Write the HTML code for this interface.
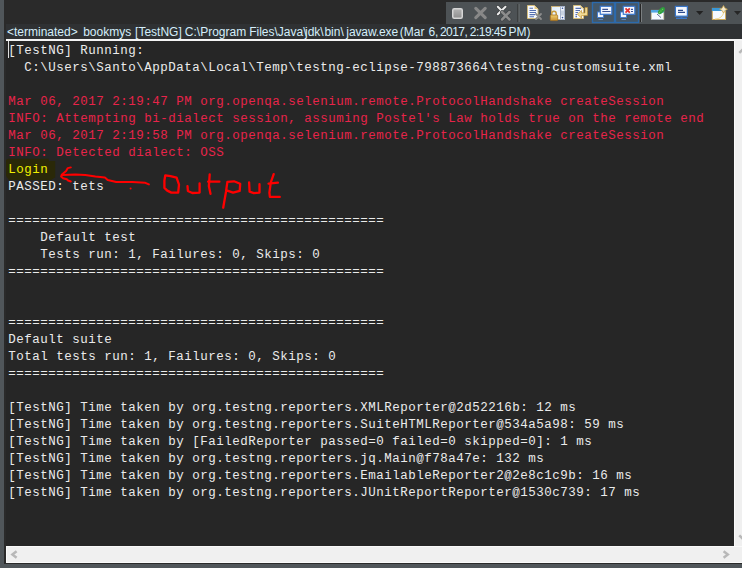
<!DOCTYPE html>
<html><head><meta charset="utf-8">
<style>
html,body{margin:0;padding:0;width:742px;height:568px;overflow:hidden;background:#50565a;}
*{box-sizing:border-box;}
#panel{position:absolute;left:4px;top:0;width:738px;height:564px;background:#2a2a2a;}
#tb{position:absolute;left:446px;top:2px;width:296px;height:22px;background:#4b4f52;}
#title{position:absolute;left:6px;top:24px;width:736px;height:15px;background:#2f3133;}
#titletext{position:absolute;left:7px;top:24px;font-family:"Liberation Sans",sans-serif;font-size:12px;color:#d4eefa;white-space:pre;line-height:17px;}
.tt{position:absolute;top:24px;font-family:"Liberation Sans",sans-serif;font-size:12px;color:#d4eefa;white-space:pre;line-height:17px;}
#frame{position:absolute;left:6px;top:39px;width:736px;height:2px;background:#f4f4f4;}
#console{position:absolute;left:6px;top:41px;width:728px;height:505px;background:#262626;overflow:hidden;}
#vs{position:absolute;left:734px;top:41px;width:8px;height:522px;background:#f0f0f0;border-left:1px solid #fafafa;}
#hs{position:absolute;left:6px;top:546px;width:736px;height:17px;background:#f0f0f0;border:1px solid #fafafa;border-right:none;}
#txt{position:absolute;left:2px;top:1.5px;font-family:"Liberation Mono",monospace;font-size:12.5px;letter-spacing:0.5px;line-height:17px;color:#ebebeb;padding-left:0.25px;white-space:pre;}
.r{color:#e8244a;}
.y{color:#f0f000;}
#caret{position:absolute;left:2px;top:0;width:1px;height:17px;background:#e0e0e0;}
</style></head>
<body>
<div id="panel"></div>
<svg id="tbsvg" width="742" height="26" viewBox="0 0 742 26" style="position:absolute;left:0;top:0">
<defs>
<linearGradient id="gsq" x1="0" y1="0" x2="0" y2="1"><stop offset="0" stop-color="#b4b4b4"/><stop offset="1" stop-color="#8e8e8e"/></linearGradient>
<linearGradient id="gwin" x1="0" y1="0" x2="1" y2="1"><stop offset="0" stop-color="#dcecfc"/><stop offset="1" stop-color="#ffffff"/></linearGradient>
<linearGradient id="ggold" x1="0" y1="0" x2="0" y2="1"><stop offset="0" stop-color="#f0d070"/><stop offset="1" stop-color="#c89030"/></linearGradient>
</defs>
<rect x="446" y="2" width="296" height="22" fill="#4d5255"/>
<!-- stop square -->
<rect x="452.75" y="8.75" width="9.5" height="9.5" rx="1.5" fill="url(#gsq)" stroke="#d6d6d6" stroke-width="1.5"/>
<!-- gray X -->
<path d="M475.8 8.3 L485.2 17.7 M485.2 8.3 L475.8 17.7" stroke="#888888" stroke-width="3.1" stroke-linecap="round"/>
<!-- double X -->
<path d="M497.8 6.8 L505 14 M505.5 6.8 L497.8 14.2" stroke="#3c3f41" stroke-width="3.4" stroke-linecap="round"/>
<path d="M497.8 6.8 L505 14 M505.5 6.8 L497.8 14.2" stroke="#ececec" stroke-width="2" stroke-linecap="round"/>
<path d="M502 12 L509.5 19.5 M509.5 12 L502 19.5" stroke="#3c3f41" stroke-width="3.8" stroke-linecap="round"/>
<path d="M502 12 L509.5 19.5 M509.5 12 L502 19.5" stroke="#8c8c8c" stroke-width="2.5" stroke-linecap="round"/>
<!-- separator -->
<rect x="517.5" y="4" width="1" height="18" fill="#2a2a2a"/><rect x="518.5" y="4" width="1" height="18" fill="#6e7275"/>
<!-- doc clear -->
<path d="M527.5 5.5 H534.5 L538 9 V18.5 H527.5 Z" fill="#f6f9ff" stroke="#d4bc7c" stroke-width="1"/>
<path d="M534.5 5.5 V9 H538 Z" fill="#e8cc84"/>
<path d="M529.5 8.3 H533 M529.5 10.4 H536 M529.5 12.5 H536 M529.5 14.6 H535 M529.5 16.7 H534" stroke="#5670b0" stroke-width="1.05"/>
<path d="M536 14 L541 19 M541 14 L536 19" stroke="#8c8c8c" stroke-width="1.8" stroke-linecap="round"/>
<!-- scroll lock -->
<rect x="551.5" y="6.5" width="13" height="13" fill="url(#gwin)" stroke="#c8b07a" stroke-width="1"/>
<rect x="560.5" y="6.5" width="4" height="13" fill="#f4f7fc" stroke="#a8b4cc" stroke-width="1"/>
<rect x="561" y="10.5" width="3" height="5" fill="#c8d2e2"/>
<circle cx="562.5" cy="8.3" r="0.8" fill="#3050a0"/><circle cx="562.5" cy="17.6" r="0.8" fill="#3050a0"/>
<path d="M551.8 15 V13.5 A2.2 2.2 0 0 1 556.2 13.5 V15" fill="none" stroke="#c89a38" stroke-width="1.4"/>
<rect x="550.3" y="15" width="7.4" height="5.6" rx="0.8" fill="url(#ggold)" stroke="#a87420" stroke-width="0.8"/>
<!-- word wrap -->
<path d="M573.5 5.5 H580.5 L583.5 8.5 V18.5 H573.5 Z" fill="#f6f9ff" stroke="#d4bc7c" stroke-width="1"/>
<path d="M580.5 5.5 V8.5 H583.5 Z" fill="#e8cc84"/>
<path d="M575.5 8.4 H581 M575.5 10.5 H580 M575.5 12.5 H578 M575.5 14.6 H577 M575.5 16.6 H577" stroke="#5670b0" stroke-width="1.05"/>
<path d="M585 7.5 H587.4 V15.6 H581.5 V18 L577.3 14.2 L581.5 10.4 V12.9 H585 Z" fill="#f0dc98" stroke="#c49434" stroke-width="0.7"/>
<!-- pressed buttons -->
<rect x="592.5" y="2.5" width="22" height="20" fill="#44586a" stroke="#2c6aac" stroke-width="1.4"/>
<rect x="615.5" y="2.5" width="23" height="20" fill="#44586a" stroke="#2c6aac" stroke-width="1.4"/>
<!-- bubble 1 -->
<rect x="597.5" y="12" width="6" height="5.5" fill="#f2f6fc" stroke="#3e7ad0" stroke-width="0.9"/>
<rect x="600.3" y="6.3" width="11.5" height="8" fill="#f4f8ff" stroke="#3e7ad0" stroke-width="1.2"/>
<path d="M602.3 9.4 H608 M602.3 11.5 H610.5" stroke="#3c5494" stroke-width="1.1"/>
<path d="M598.5 19.5 H603" stroke="#5a88c8" stroke-width="0.9"/>
<!-- bubble 2 -->
<rect x="620.5" y="12" width="6" height="5.5" fill="#f2f6fc" stroke="#3e7ad0" stroke-width="0.9"/>
<rect x="623.3" y="6.3" width="11.5" height="8" fill="#f4f8ff" stroke="#3e7ad0" stroke-width="1.2"/>
<path d="M625.5 8.3 L629.8 12.6 M629.8 8.3 L625.5 12.6" stroke="#e03030" stroke-width="1.8"/>
<path d="M631 9.4 H633 M631 11.5 H633" stroke="#3c5494" stroke-width="1.1"/>
<path d="M621.5 19.5 H626" stroke="#5a88c8" stroke-width="0.9"/>
<!-- separator 2 -->
<rect x="640" y="4" width="1" height="18" fill="#262626"/><rect x="641" y="4" width="1" height="18" fill="#7a7e80"/>
<!-- pin window -->
<rect x="651.3" y="10.3" width="12.5" height="9.2" fill="#f4f9ff" stroke="#cfc69a" stroke-width="0.8"/>
<rect x="651" y="19" width="13" height="0.9" fill="#a8b0c0"/>
<rect x="651" y="10" width="13" height="2.6" fill="#52a6e2"/>
<path d="M657 14 L661 17.6" stroke="#50608a" stroke-width="0.9"/>
<ellipse cx="661.4" cy="10.7" rx="4.3" ry="2.3" transform="rotate(-45 661.4 10.7)" fill="#2e9e3e"/>
<path d="M659 13 L663.5 8.5" stroke="#6cc85a" stroke-width="1.2" stroke-dasharray="1.2 1"/>
<!-- monitor -->
<rect x="675.4" y="6.4" width="12" height="9.8" fill="#f4f8ff" stroke="#3a76c8" stroke-width="1.25"/>
<path d="M678 10.4 H683 M678 12.4 H685" stroke="#2c4a8c" stroke-width="1.1"/>
<rect x="676" y="17.6" width="11" height="1.4" fill="#3a76c8"/>
<rect x="680.5" y="16.6" width="2" height="1.2" fill="#3a76c8"/>
<!-- dropdown 1 -->
<path d="M696 11 H703.3 L699.65 15 Z" fill="#222222"/>
<!-- new console -->
<rect x="712.3" y="8.3" width="13.3" height="11.2" fill="#f4faff" stroke="#d0a850" stroke-width="0.9"/>
<rect x="712" y="8" width="14" height="3" fill="#3a98d8"/>
<path d="M715 19 Q722 19 724 12" fill="none" stroke="#f0d890" stroke-width="1"/>
<path d="M723.5 5.6 L725 8.3 L727.3 9.3 L725 10.4 L723.5 13 L722 10.4 L719.7 9.3 L722 8.3 Z" fill="#f4ead0" stroke="#d0a850" stroke-width="0.8"/>
<!-- dropdown 2 -->
<path d="M734 11 H741 L737.5 15 Z" fill="#262626"/>
</svg>
<div id="title"></div>
<div id="titletext">&lt;terminated&gt; <span style="position:relative;left:2.1px">bookmys</span> <span style="position:relative;left:2.7px">[TestNG]</span> <span style="position:relative;left:2.4px">C:\Program</span> <span style="position:relative;left:2px">Files\Java\</span><span style="position:relative;left:0.5px">jdk\</span><span style="position:relative;left:1.2px">bin\</span><span style="position:relative;left:3.8px;letter-spacing:-0.12px">javaw.exe</span> </div>
<div class="tt" style="left:399.8px;letter-spacing:0px">(Mar</div><div class="tt" style="left:428.4px;letter-spacing:0px">6,</div><div class="tt" style="left:439.9px;letter-spacing:-0.55px">2017,</div><div class="tt" style="left:469.8px;letter-spacing:-0.53px">2:19:45</div><div class="tt" style="left:508.4px;letter-spacing:0px">PM)</div>
<div id="frame"></div>
<div id="vs"></div>
<div id="hs"></div>
<svg width="742" height="568" style="position:absolute;left:0;top:0">
<g fill="none" stroke="#b8b8b8" stroke-width="2.5" stroke-linejoin="miter">
<path d="M16.6 551.2 L12.4 554.5 L16.6 557.8"/>
<path d="M723.6 551.2 L727.8 554.5 L723.6 557.8"/>
<path d="M739.3 52.8 L743 49.2 L746.7 52.8"/>
<path d="M739.3 535.4 L743 539 L746.7 535.4"/>
</g>
</svg>
<div id="console">
<svg width="742" height="568" style="position:absolute;left:-6px;top:-41px">
<path d="M8 158.7 H48.3 L49 160.9 H55.2 V177.3 L51 179.9 H9 L6 176 V160 Z" fill="#2a2808"/>
</svg>
<div id="txt">[TestNG] Running:
  C:\Users\Santo\AppData\Local\Temp\testng-eclipse-798873664\testng-customsuite.xml

<span class="r">Mar 06, 2017 2:19:47 PM org.openqa.selenium.remote.ProtocolHandshake createSession
INFO: Attempting bi-dialect session, assuming Postel's Law holds true on the remote end
Mar 06, 2017 2:19:58 PM org.openqa.selenium.remote.ProtocolHandshake createSession
INFO: Detected dialect: OSS</span>
<span class="y">Login</span>
PASSED: tets

===============================================
    Default test
    Tests run: 1, Failures: 0, Skips: 0
===============================================


===============================================
Default suite
Total tests run: 1, Failures: 0, Skips: 0
===============================================

[TestNG] Time taken by org.testng.reporters.XMLReporter@2d52216b: 12 ms
[TestNG] Time taken by org.testng.reporters.SuiteHTMLReporter@534a5a98: 59 ms
[TestNG] Time taken by [FailedReporter passed=0 failed=0 skipped=0]: 1 ms
[TestNG] Time taken by org.testng.reporters.jq.Main@f78a47e: 132 ms
[TestNG] Time taken by org.testng.reporters.EmailableReporter2@2e8c1c9b: 16 ms
[TestNG] Time taken by org.testng.reporters.JUnitReportReporter@1530c739: 17 ms</div>
<div id="caret"></div>
</div>
<svg width="742" height="568" style="position:absolute;left:0;top:0">
<g fill="none" stroke="#ff0000" stroke-width="2" stroke-linecap="round" stroke-linejoin="round">
<path d="M70.8 167.4 L67.8 168.1 L66.1 171.1 L61.7 174.8 L61.1 176.5 L63.1 178.2 L66.8 179.2 L68.1 180.5 L70.8 181.5"/>
<path d="M62.5 175 L75.2 174.5 L85.3 175.1 L95.4 176.5 L104.9 177.5 L107.7 180 L116.2 182 L132.3 182 L145.3 182.8 L148.9 184.4"/>
</g>
<circle cx="130.6" cy="188.6" r="1" fill="#ff0000"/>
<g fill="none" stroke="#ff0000" stroke-width="2.3" stroke-linecap="round" stroke-linejoin="round">
<path d="M165.3 175.3 L170.5 176.1 L176.6 177.7 L179 184.6 L178.2 192.6 L171.3 192.6 L167.3 190.6 L164.4 187.8 L164.4 180.5 Z"/>
<path d="M187.5 186.2 L187.9 191 L192.3 193 L199.6 192.6 L199.6 183.3"/>
<path d="M209.7 174.4 L208.9 186.2 L210.5 193.8 M208.1 181.7 L219.4 181.7"/>
<path d="M223.2 207.7 L226 191.7 L227.4 181.8 L234 181.3 L240.2 183.7 L239.7 190.8 L233.1 192.6 L226.5 190.3"/>
<path d="M249.1 182.3 L249.6 191.7 L253.8 193.1 L259.5 192.6 L259.5 184.2"/>
<path d="M273.7 174.2 L270.8 182.3 L269.4 192.6 L269.9 196.9 L279.8 196.9 M268.5 183.7 L277.9 182.7"/>
</g>
</svg>
</body></html>
